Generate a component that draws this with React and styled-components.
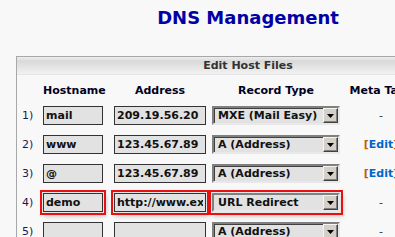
import React from "react";
import styled, { createGlobalStyle, css } from "styled-components";

const Global = createGlobalStyle`
  html, body { margin: 0; padding: 0; overflow: hidden; background: #f8f8f8; }
  body { font-family: "DejaVu Sans", Verdana, sans-serif; font-size: 11px; color: #222; }
`;

const Page = styled.div`
  width: 464px;
  padding: 7px 0 0 16px;
`;

const Title = styled.h1`
  margin: 0;
  font-size: 18px;
  line-height: 22px;
  font-weight: bold;
  text-align: center;
  color: #0000a6;
`;

const Panel = styled.div`
  margin-top: 27px;
  border: 1px solid #a8a8a8;
  background: #f8f8f8;
`;

const PanelHeader = styled.div`
  height: 16px;
  padding-top: 1px;
  line-height: 16px;
  text-align: center;
  font-weight: bold;
  color: #333;
  background: linear-gradient(to bottom, #eeeeee 0%, #d9d9d9 25%, #e4e4e4 60%, #f2f2f2 100%);
  border-bottom: 1px solid #e4e4e4;
`;

const Body = styled.div`
  padding-top: 4px;
`;

const Row = styled.div`
  display: grid;
  grid-template-columns: 26px 71px 98px 136px 66px;
  align-items: center;
  height: ${(p) => (p.$head ? 22 : 29)}px;
`;

const ColHead = styled.div`
  width: ${(p) => p.$w}px;
  text-align: center;
  font-weight: bold;
  color: #000022;
  white-space: nowrap;
`;

const Num = styled.div`
  padding-left: 5px;
  color: #1a1a50;
`;

const ring = css`
  box-shadow: 0 0 0 1px #e6e6e6, 0 0 0 3px #e81010, 2px 3px 4px 1px rgba(0, 0, 0, 0.25);
`;

const TextInput = styled.input`
  box-sizing: border-box;
  width: ${(p) => p.$w}px;
  height: 19px;
  margin: 0;
  padding: 0 2px;
  border: 1px solid #333;
  background: #e2e2e2;
  font-family: "DejaVu Sans", Verdana, sans-serif;
  font-size: 11px;
  font-weight: bold;
  color: #111;
  outline: none;
  ${(p) => p.$hl && ring}
`;

const SelectBox = styled.div`
  box-sizing: border-box;
  width: 128px;
  height: 19px;
  display: flex;
  align-items: center;
  justify-content: space-between;
  border: 2px solid;
  border-color: #808080 #e8e8e8 #e8e8e8 #808080;
  box-shadow: inset 1px 1px 0 #404040;
  background: #e2e2e2;
  padding-left: 4px;
  font-weight: bold;
  color: #111;
  white-space: nowrap;
  ${(p) => p.$hl && ring}
`;

const Arrow = styled.div`
  box-sizing: border-box;
  width: 15px;
  height: 15px;
  display: flex;
  align-items: center;
  justify-content: center;
  background: #d4d0c8;
  border: 1px solid;
  border-color: #f4f4f4 #404040 #404040 #f4f4f4;
  box-shadow: inset -1px -1px 0 #808080;
`;

const Meta = styled.div`
  text-align: center;
  color: #333;
  font-weight: ${(p) => (p.$link ? "bold" : "normal")};
  white-space: nowrap;
`;

const Bracket = styled.span`
  color: #c06000;
`;

const EditLink = styled.a`
  color: #0066cc;
  text-decoration: none;
`;

const rows = [
  { host: "mail", addr: "209.19.56.20", type: "MXE (Mail Easy)", edit: false },
  { host: "www", addr: "123.45.67.89", type: "A (Address)", edit: true },
  { host: "@", addr: "123.45.67.89", type: "A (Address)", edit: true },
  { host: "demo", addr: "http://www.example.com", type: "URL Redirect", edit: false, hl: true },
  { host: "", addr: "", type: "A (Address)", edit: false },
];

const ArrowIcon = () => (
  <svg width="7" height="4" viewBox="0 0 7 4">
    <path d="M0 0H7L3.5 4Z" fill="#000" />
  </svg>
);

export default function App() {
  return (
    <>
      <Global />
      <Page>
        <Title>DNS Management</Title>
        <Panel>
          <PanelHeader>Edit Host Files</PanelHeader>
          <Body>
            <Row $head>
              <div />
              <ColHead $w={60}>Hostname</ColHead>
              <ColHead $w={92}>Address</ColHead>
              <ColHead $w={128}>Record Type</ColHead>
              <ColHead $w={66}>Meta Tags</ColHead>
            </Row>
            {rows.map((r, i) => (
              <Row key={i}>
                <Num>{i + 1})</Num>
                <div>
                  <TextInput $w={60} $hl={r.hl} value={r.host} readOnly />
                </div>
                <div>
                  <TextInput $w={92} $hl={r.hl} value={r.addr} readOnly />
                </div>
                <div>
                  <SelectBox $hl={r.hl}>
                    <span>{r.type}</span>
                    <Arrow>
                      <ArrowIcon />
                    </Arrow>
                  </SelectBox>
                </div>
                {r.edit ? (
                  <Meta $link>
                    <Bracket>[</Bracket>
                    <EditLink href="#">Edit</EditLink>
                    <Bracket>]</Bracket>
                  </Meta>
                ) : (
                  <Meta>-</Meta>
                )}
              </Row>
            ))}
          </Body>
        </Panel>
      </Page>
    </>
  );
}
